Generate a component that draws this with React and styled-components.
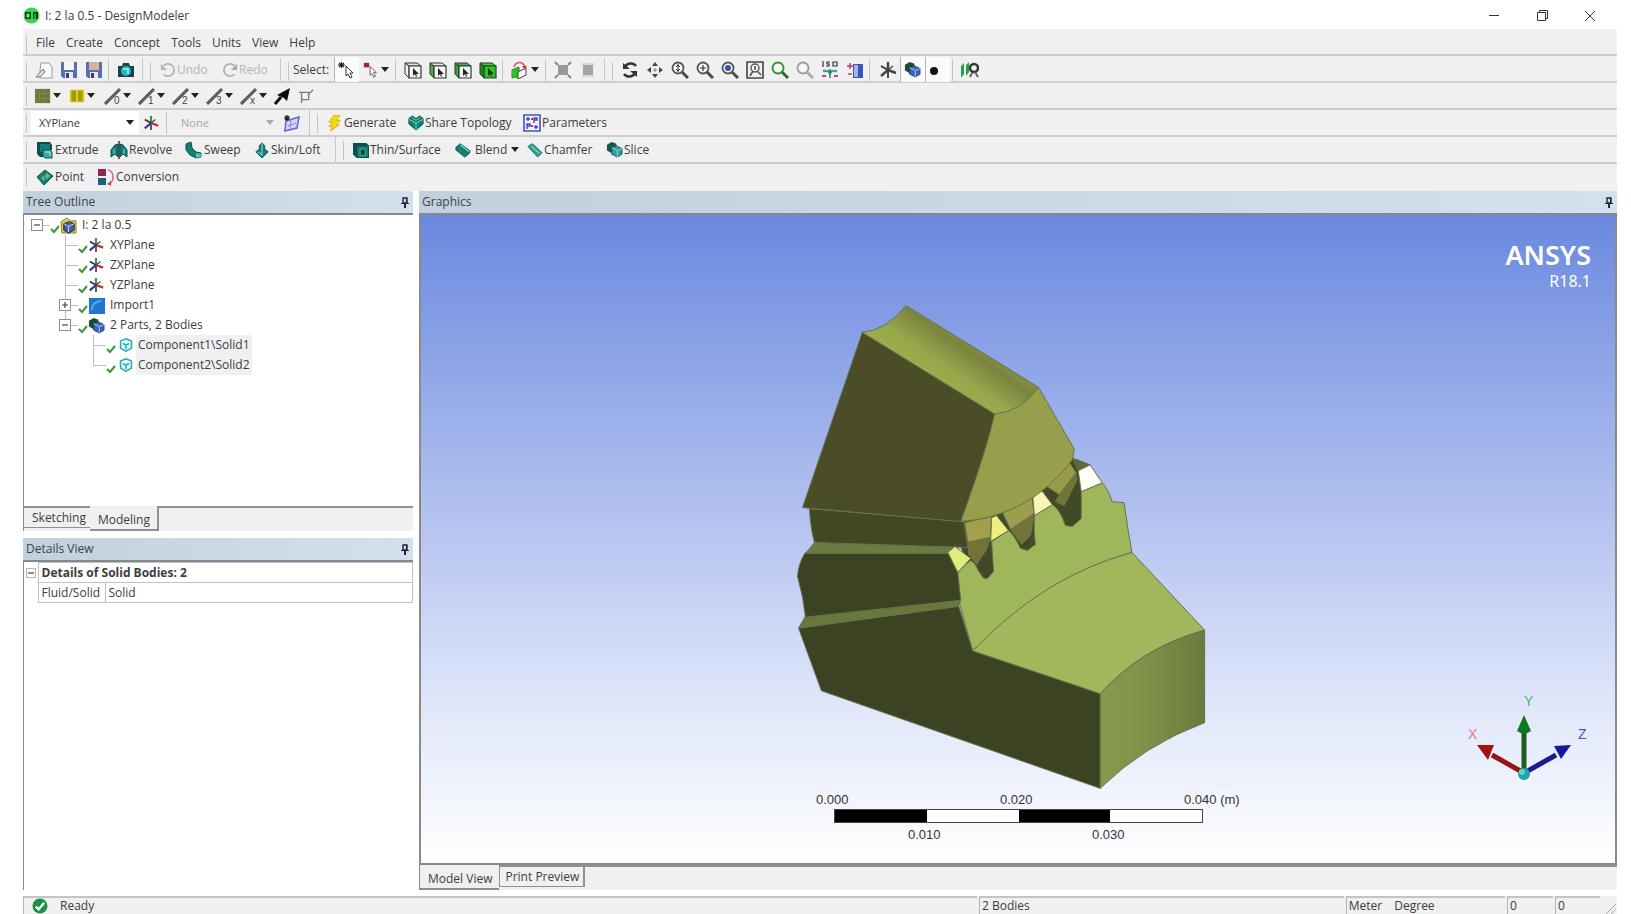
import React, { useState } from "react";
import styled, { createGlobalStyle } from "styled-components";

const GlobalStyle = createGlobalStyle`
  * {
    box-sizing: border-box;
  }
  body {
    margin: 0;
    background: white;
    color: #3c3c3c;
    font-family: "Open Sans", "Noto Sans", sans-serif;
    font-size: 12px;
    line-height: 16px;
  }
  button, select {
    font: inherit;
    color: inherit;
  }
`;

const Window = styled.div`
  height: 100vh;
  min-height: 600px;
  padding: 0 14px 0 23px;
  display: flex;
  flex-direction: column;
  overflow: hidden;
`;

const TitleBar = styled.header`
  height: 29px;
  flex: none;
  display: flex;
  align-items: center;
  justify-content: space-between;
  padding-top: 2px;
`;

const Title = styled.h1`
  margin: 0;
  display: flex;
  align-items: center;
  gap: 5px;
  font-size: 12px;
  font-weight: 400;
`;

const WindowControls = styled.div`
  display: flex;
  padding-right: 3px;
`;

const WindowButton = styled.button`
  width: 48px;
  height: 26px;
  padding: 0;
  border: 0;
  background: none;
  display: flex;
  align-items: center;
  justify-content: center;
`;

const Bar = styled.div`
  height: 27px;
  flex: none;
  display: flex;
  padding-top: ${(props) => (props.$low ? 2 : 0)}px;
  background: #f0f0f0;
  border-bottom: 2px solid ${(props) => (props.$plain ? "#f0f0f0" : "#cdcdcd")};
`;

const Band = styled.div`
  display: flex;
  align-items: center;
  padding-left: 8px;
  padding-right: ${(props) => props.$end || 0}px;
  background: linear-gradient(#c4c4c4, #c4c4c4) 3px 4px / 1px 19px no-repeat;
  border-right: ${(props) => (props.$last ? "0" : "1px solid #c8c8c8")};
  margin-right: 4px;
`;

const MenuItem = styled.button`
  border: 0;
  padding: 0 5px;
  margin-right: 1px;
  background: none;
`;

const Tool = styled.button`
  flex: none;
  width: ${(props) => props.$width || 25}px;
  height: 25px;
  padding: 0 0 0 ${(props) => (props.$active ? 3 : 4)}px;
  border: 0;
  border-left: ${(props) => (props.$active ? "1px solid #b4b4b4" : "0")};
  background: ${(props) => (props.$active ? "#fbfbfb" : "none")};
  display: flex;
  align-items: center;
  gap: 2px;
  white-space: nowrap;
  &:disabled {
    color: #b5b5b5;
  }
`;

const CommandTool = styled(Tool)`
  padding-left: 5px;
  gap: ${(props) => (props.$roomy ? 4 : 1)}px;
`;

const Separator = styled.span`
  width: 1px;
  height: 22px;
  margin: 0 ${(props) => props.$right || 4}px 0 2px;
  background: #c4c4c4;
`;

const Label = styled.span`
  padding-right: 5px;
`;

const Combo = styled.label`
  display: flex;
  align-items: center;
  width: ${(props) => props.$width}px;
  height: 23px;
  padding-right: 5px;
  background: ${(props) => (props.$disabled ? "#f0f0f0" : "white")};
`;

const ComboSelect = styled.select`
  flex: 1;
  min-width: 0;
  border: 0;
  padding: 0 0 0 8px;
  outline: none;
  background: none;
  appearance: none;
  font-size: 11px;
  &:disabled {
    color: #a5a5a5;
    opacity: 1;
  }
`;

const Workspace = styled.main`
  flex: 1;
  min-height: 0;
  display: flex;
  gap: 6px;
`;

const Sidebar = styled.aside`
  width: 390px;
  flex: none;
  display: flex;
  flex-direction: column;
  gap: 7px;
`;

const Panel = styled.section`
  flex: ${(props) => props.$grow || "1"};
  min-width: 0;
  min-height: 0;
  display: flex;
  flex-direction: column;
`;

const PanelHeader = styled.div`
  height: 24px;
  flex: none;
  display: flex;
  align-items: center;
  justify-content: space-between;
  padding: 0 4px 0 3px;
  background: linear-gradient(90deg, #c2d0dd, #d3e1ef);
  border-bottom: 2px solid #84888e;
`;

const PanelTitle = styled.h2`
  margin: 0;
  font-size: 12px;
  font-weight: 400;
  color: #39424e;
`;

const PinButton = styled.button`
  border: 0;
  padding: 0;
  background: none;
  display: flex;
`;

const TreeBox = styled.div`
  flex: 1;
  min-height: 0;
  border-left: 1px solid #8a8a8a;
  background: white;
`;

const TreeRow = styled.div`
  height: 20px;
  display: flex;
  align-items: center;
  padding-left: ${(props) => 7 + props.$level * 28}px;
`;

const Joint = styled.span`
  width: 12px;
  height: 20px;
  display: flex;
  align-items: center;
  background: ${(props) =>
    props.$level
      ? `linear-gradient(#bdbdbd, #bdbdbd) 6px 0 / 1px ${
          props.$last ? 10 : 20
        }px no-repeat,
        linear-gradient(#bdbdbd, #bdbdbd) 6px 10px / 6px 1px no-repeat`
      : "none"};
`;

const Dash = styled.span`
  width: 7px;
  height: 1px;
  background: #bdbdbd;
`;

const Expander = styled.button`
  width: ${(props) => (props.$small ? 10 : 12)}px;
  height: ${(props) => (props.$small ? 10 : 12)}px;
  padding: 0;
  border: 1px solid ${(props) => (props.$small ? "#b5b5b5" : "#8d8d8d")};
  background: white;
  display: flex;
  align-items: center;
  justify-content: center;
`;

const TreeIcon = styled.span`
  width: ${(props) => (props.$wide ? 20 : 18)}px;
  display: flex;
  justify-content: ${(props) => (props.$wide ? "center" : "flex-start")};
`;

const TreeLabel = styled.span`
  padding: 2px 2px 2px ${(props) => (props.$selected ? 2 : 4)}px;
  background: ${(props) => (props.$selected ? "#f0f0f0" : "none")};
`;

const TabStrip = styled.div`
  height: 25px;
  flex: none;
  display: flex;
  align-items: flex-start;
  background: #f0f0f0;
  border-left: 1px solid #8a8a8a;
`;

const TabFill = styled.div`
  flex: 1;
  border-top: 2px solid #909090;
`;

const Tab = styled.button`
  height: ${(props) => (props.$active ? 25 : 22)}px;
  padding: ${(props) => (props.$active ? "6px 7px 1px 9px" : "1px 4px 0")};
  padding-left: ${(props) => (props.$start ? 5 : 8)}px;
  background: #f0f0f0;
  border: 0 solid #909090;
  border-top-width: ${(props) => (props.$active ? 0 : 2)}px;
  border-right-width: ${(props) => (props.$edge ? 2 : 0)}px;
  border-left-width: ${(props) => (props.$start ? 1 : 0)}px;
  border-bottom-width: ${(props) => (props.$active ? 2 : 1)}px;
`;

const DetailsBox = styled.div`
  flex: 1;
  min-height: 0;
  border-left: 1px solid #8a8a8a;
  background: white;
`;

const DetailsTable = styled.table`
  width: 100%;
  border-collapse: collapse;
  table-layout: fixed;
  th,
  td {
    height: 20px;
    padding: 1px 3px;
    border: 1px solid #c2c2c2;
    text-align: left;
  }
  .fold {
    padding: 0 0 0 2px;
    border: 0;
  }
`;

const FoldCol = styled.col`
  width: 14px;
`;

const NameCol = styled.col`
  width: 67px;
`;

const Viewport = styled.div`
  position: relative;
  flex: 1;
  min-height: 0;
  border: 1px solid #8a8a8a;
  border-width: 0 2px 2px 2px;
  background: linear-gradient(#6a89df 0%, #a9baed 40%, #dfe6fa 75%, #ffffff 100%);
`;

const Scene = styled.svg`
  display: block;
  width: 100%;
  height: 100%;
`;

const Brand = styled.div`
  position: absolute;
  top: 22px;
  right: 24px;
  color: white;
  text-align: right;
  font-family: "Noto Sans", sans-serif;
`;

const BrandName = styled.div`
  font-size: 27px;
  line-height: 36px;
  font-weight: 600;
`;

const BrandRelease = styled.div`
  font-size: 16px;
  line-height: 16px;
`;

const Triad = styled.svg`
  position: absolute;
  right: 26px;
  bottom: 76px;
  font-family: "Liberation Sans", sans-serif;
  font-size: 14px;
`;

const Ruler = styled.div`
  position: absolute;
  left: 50%;
  bottom: 20px;
  width: 428px;
  margin-left: -202px;
  color: #333;
  font-family: "Liberation Sans", sans-serif;
  font-size: 13px;
`;

const RulerLabels = styled.div`
  display: flex;
  padding-left: ${(props) => props.$shift || 0}px;
  span {
    width: 184px;
    flex: none;
    white-space: nowrap;
  }
`;

const RulerBar = styled.div`
  width: 369px;
  height: 14px;
  margin: 1px 0 4px 18px;
  display: grid;
  grid-template-columns: repeat(4, 1fr);
  border: 1px solid #444;
  background: white;
  span:nth-child(odd) {
    background: black;
  }
`;

const StatusBar = styled.footer`
  height: 18px;
  margin-top: 6px;
  flex: none;
  display: flex;
  background: #f0f0f0;
`;

const StatusCell = styled.div`
  flex: ${(props) => props.$flex || "none"};
  width: ${(props) => props.$width || "auto"};
  display: flex;
  align-items: center;
  gap: 12px;
  height: 18px;
  padding: 0 1px 0 ${(props) => props.$indent || 2}px;
  border-top: 2px solid #c4c4c4;
  border-left: 1px solid #b4b4b4;
  margin-right: 2px;
`;

const Svg = ({ children, size = 18 }) => (
  <svg
    width={size}
    height={size}
    viewBox="0 0 18 18"
    fill="none"
    stroke="none"
    aria-hidden="true"
  >
    {children}
  </svg>
);

const Caret = ({ color = "#222" }) => (
  <svg width="8" height="5" viewBox="0 0 8 5" aria-hidden="true">
    <path d="M0 0h8L4 5z" fill={color} />
  </svg>
);

const cursorPath = "M8 5v10l2-2 2 4 2-1-2-4h3z";

const Lens = ({ color = "#4a4a4a", rim = "#555", children }) => (
  <Svg>
    <path d="M11 11l6 6" stroke={color} strokeWidth="3" />
    <circle cx="7" cy="7" r="5.5" fill="#f6f6f6" stroke={rim} strokeWidth="1.8" />
    {children}
  </Svg>
);

const PickBox = ({ front = "#f4f4f4", top = "#dcefdc", edge = "#f4f4f4" }) => (
  <Svg>
    <path d="M1 2l4 3v12l-4-4z" fill={edge} stroke="#333" />
    <path d="M1 2h12l4 3H5z" fill={top} stroke="#333" />
    <path d="M5 5h12v12H5z" fill={front} stroke="#2d3a2d" strokeWidth="1.2" />
    <path d="M9 7v8l2-2 1 3 1-1-1-2h3z" fill="#222" />
  </Svg>
);

const LineTool = ({ mark }) => (
  <Svg>
    <path d="M2 17L17 2" stroke="#4b4b4b" strokeWidth="3" />
    <path d="M2 17L17 2" stroke="#999" strokeWidth="0.6" />
    <text x="11" y="17" fontSize="10" fill="#444" fontFamily="Liberation Sans">
      {mark}
    </text>
  </Svg>
);

const Disk = ({ label }) => (
  <Svg>
    <path d="M1 1h16v16H3l-2-2z" fill="#5a6db0" />
    <path d="M4 1h10v8H4z" fill={label} />
    <path d="M5 11h8v6H5z" fill="#e8ecf6" />
    <path d="M6 12h3v5H6z" fill="#33417c" />
  </Svg>
);

const AxisIcon = ({ gray }) => (
  <Svg size={gray ? 18 : 16}>
    <path d="M9 9V1" stroke={gray ? "#444" : "#2f9a48"} strokeWidth="2.4" />
    <path d="M2 5l7 4M9 9v8" stroke="#333" strokeWidth="1.8" />
    <path d="M9 9l-7 6" stroke={gray ? "#444" : "#3434a0"} strokeWidth="2.4" />
    <path d="M9 9l8 3" stroke={gray ? "#444" : "#c62f3c"} strokeWidth="2.6" />
    <path d="M9 9l5-4" stroke="#444" strokeWidth="1.4" />
  </Svg>
);

const Cubes = ({ back = "#174e38", front = "#3d67b8" }) => (
  <Svg size={17}>
    <path d="M1 4l5-3 5 2v8l-5 2-5-3z" fill={back} />
    <path d="M6 7l5-2 6 3v6l-5 3-6-3z" fill={front} stroke="#24365d" strokeWidth=".8" />
    <path d="M6 7l6 3 5-2M12 10v7" stroke="#b6cdf0" strokeWidth=".9" />
  </Svg>
);

const teal = "#128075";
const darkTeal = "#0c4f4a";

const icons = {
  newSketch: (
    <Svg>
      <path d="M6 2h8l3 4v11H5V9z" fill="#fafafa" stroke="#999" />
      <path d="M1 16l7-8 2 3-5 5z" fill="#ddd" stroke="#777" />
    </Svg>
  ),
  camera: (
    <Svg>
      <path d="M1 5h4l1-3h6l1 3h4v11H1z" fill="#1d4148" />
      <circle cx="9" cy="10" r="5" fill="#25b8bb" />
      <path d="M6 8h5v5" stroke="#a5f0ee" strokeWidth="1.5" />
    </Svg>
  ),
  undo: (
    <Svg size={16}>
      <path d="M4 4a7 7 0 1 1 0 10" stroke="#b4b4b4" strokeWidth="2" />
      <path d="M1 2v7h7z" fill="#b4b4b4" />
    </Svg>
  ),
  redo: (
    <Svg size={16}>
      <path d="M14 4a7 7 0 1 0 0 10" stroke="#b0b0b0" strokeWidth="2" />
      <path d="M17 2v7h-7z" fill="#a8a8a8" />
    </Svg>
  ),
  selectNew: (
    <Svg>
      <path d="M0 4h7M3.500 1v6M1 2l5 4M6 2L1 6" stroke="#222" strokeWidth="1.2" />
      <path d={cursorPath} fill="white" stroke="#333" />
    </Svg>
  ),
  selectMode: (
    <Svg size={16}>
      <path d="M1 1h6v5H1z" fill="#a81e38" />
      <path d={cursorPath} fill="white" stroke="#555" />
    </Svg>
  ),
  extend: (
    <Svg>
      <path d="M1 9l7-3v9l-7 2z" fill="#27c427" stroke="#3c6b3c" />
      <path d="M1 9l6 3v6l-6-3z" fill="#27c427" />
      <path d="M7 11l8-4v7l-8 4z" fill="#f7f7f7" stroke="#444" />
      <path d="M3 6c2-6 9-6 11 0" stroke="#cb5a5a" strokeWidth="1.6" />
      <path d="M11 5h5l-2 4z" fill="#b44" />
    </Svg>
  ),
  blockedA: (
    <Svg>
      <path d="M4 4h10v10H4z" fill="#9a9a9a" />
      <path d="M1 1l3 3M17 1l-3 3M1 17l3-3M17 17l-3-3" stroke="#888" strokeWidth="2" />
    </Svg>
  ),
  blockedB: (
    <Svg>
      <path d="M4 4h10v10H4z" fill="#a4a4a4" />
      <path d="M2 3h14M2 15h14" stroke="#c6c6c6" />
    </Svg>
  ),
  rotate: (
    <Svg>
      <path d="M15 5C12 1 6 2 4 6M3 13c3 4 9 3 11-1" stroke="#333" strokeWidth="2.6" />
      <path d="M2 2v6h7zM16 16v-6H9z" fill="#333" />
    </Svg>
  ),
  pan: (
    <Svg>
      <path d="M9 1l3 4H6zM9 17l3-4H6zM1 9l4-3v6zM17 9l-4-3v6z" fill="#444" />
      <path d="M9 7v4M7 9h4" stroke="#888" />
    </Svg>
  ),
  magnifier: (
    <Svg>
      <path d="M1 1h16v16H1z" stroke="#444" strokeWidth="1.6" />
      <circle cx="9" cy="7" r="4" fill="#f6f6f6" stroke="#555" strokeWidth="1.4" />
      <path d="M11 10l4 4M4 15l3-5M9 5v4" stroke="#555" strokeWidth="1.6" />
    </Svg>
  ),
  iso: (
    <Svg>
      <path d="M2 0v6M9 1H6v2h2v2H5M12 1h4v4h-4z" stroke="#333" strokeWidth="1.2" />
      <path d="M2 10h3M13 10h3" stroke="#2aa5b0" strokeWidth="2.4" />
      <path d="M5 10h8M9 8v9" stroke="#2a8d88" strokeWidth="1.6" />
      <path d="M6 10l3 4 3-4z" fill="#28867c" />
      <path d="M1 15h4M13 15h4" stroke="#c34a62" strokeWidth="2" />
    </Svg>
  ),
  lookAt: (
    <Svg>
      <path d="M7 3h10v14H7z" fill="#3a55bb" />
      <path d="M8 4h4v12H8z" fill="#a5b3e8" />
      <path d="M1 5h6M4 2v6M2 13h4" stroke="#c23a5d" strokeWidth="1.5" />
    </Svg>
  ),
  point: (
    <Svg>
      <circle cx="5" cy="10" r="4" fill="#111" />
    </Svg>
  ),
  lookFace: (
    <Svg>
      <path d="M0 5l3-3v11l-3 4zM5 4l3-3v10l-3 4z" fill="#28a04a" />
      <circle cx="13" cy="7" r="4" fill="#eee" stroke="#333" strokeWidth="2.4" />
      <path d="M11 12l-2 4M14 11l3 5" stroke="#666" strokeWidth="2" />
    </Svg>
  ),
  edgeColor: (
    <Svg size={16}>
      <path d="M0 1h17v16H0z" fill="#75773a" />
      <path d="M5 1v16M11 1v16M0 6h17M0 12h17" stroke="#868857" />
    </Svg>
  ),
  faceColor: (
    <Svg size={16}>
      <path d="M1 2h16v14H1z" fill="#cfc80e" />
      <path d="M3 3h5v12H3zM10 3h5v12h-5z" fill="#a39b06" />
      <path d="M9 2v14" stroke="#ece654" />
    </Svg>
  ),
  arrow: (
    <Svg>
      <path d="M2 17l6-7" stroke="#111" strokeWidth="3" />
      <path d="M17 1l-3 13-3-3-7-3z" fill="#0c0c0c" />
    </Svg>
  ),
  vertex: (
    <Svg size={16}>
      <path d="M4 5h8v8H4zM11 8l6-6M1 5h4M4 12v5" stroke="#7d7d7d" strokeWidth="1.5" />
    </Svg>
  ),
  sketch: (
    <Svg>
      <path d="M3 7l13-4-2 11-12 3z" fill="#d5d5f7" stroke="#6b68d0" strokeWidth="1.6" />
      <path d="M5 12l8-3M8 5l-1 10" stroke="#8987dd" />
      <path d="M1 4h6M4 1v6M2 2l4 4M6 2L2 6" stroke="#222" strokeWidth="1.2" />
    </Svg>
  ),
  generate: (
    <Svg size={16}>
      <path d="M8 0h7l-4 6h4l-4 5h3L4 18l2-5H2l4-5H2z" fill="#efdc16" stroke="#c9a408" strokeWidth=".8" />
    </Svg>
  ),
  share: (
    <Svg size={16}>
      <path d="M1 4l4-3 4 3 4-3 4 3v6l-8 7-8-7z" fill={teal} stroke={darkTeal} />
      <path d="M1 5l8 4 8-4M9 9v8M5 3l4 3 4-3" stroke="#7de0ce" />
    </Svg>
  ),
  parameters: (
    <Svg>
      <path d="M1 1h16v16H1z" fill="#f2f2ff" stroke="#3b57b8" strokeWidth="1.6" />
      <path d="M4 15v-5h3v2H4M11 9V4h3v2h-3M3 5h4M5 3v4M11 13h4M13 11v4" stroke="#4a3dc2" strokeWidth="1.4" />
      <path d="M8 5h2M8 12h2" stroke="#c53a60" strokeWidth="2" />
    </Svg>
  ),
  extrude: (
    <Svg>
      <path d="M1 1h13l2 3v5h-6v7H4l-3-3z" fill={darkTeal} />
      <path d="M4 3h10v8H4z" fill={teal} />
      <path d="M7 9h7l2 2v6H9l-2-2z" fill="#35ab9c" stroke="#0c5f58" />
      <path d="M9 11h5v4" stroke="#b8f0e5" />
    </Svg>
  ),
  revolve: (
    <Svg>
      <path d="M1 16V9l4-5 3-1v13l-3-3zM17 16V9l-4-5-3-1v13l3-3z" fill={teal} stroke={darkTeal} />
      <path d="M9 0v18" stroke="#203f3c" strokeWidth="1.5" />
      <path d="M4 8v5M14 8v5" stroke="#90e1d3" />
    </Svg>
  ),
  sweep: (
    <Svg>
      <path d="M1 3l5-2 1 6 4 4 5 1v4l-5 1-6-3-4-5z" fill={teal} stroke={darkTeal} />
      <path d="M11 12l5 1v3l-5 1z" fill="#55c7b7" />
    </Svg>
  ),
  skin: (
    <Svg size={16}>
      <path d="M6 4l3-3 3 3v4l4 3-7 7-7-7 4-3z" fill={teal} stroke={darkTeal} />
      <path d="M9 2v14M4 11l5 3" stroke="#74d4c7" strokeWidth="1.3" />
    </Svg>
  ),
  thin: (
    <Svg size={16}>
      <path d="M0 1h15l3 3v14H4l-4-4z" fill={darkTeal} />
      <path d="M5 5h12v12H5z" fill={teal} />
      <path d="M8 8h6v7H8z" fill="#0b4541" stroke="#4bb9aa" />
    </Svg>
  ),
  blend: (
    <Svg size={16}>
      <path d="M1 6l5-4 11 8-1 3-5 4L1 9z" fill={teal} stroke={darkTeal} />
      <path d="M6 3l10 8" stroke="#77d8c7" strokeWidth="1.5" />
    </Svg>
  ),
  chamfer: (
    <Svg size={16}>
      <path d="M1 5l5-3 11 10-5 5z" fill="#2e9e92" stroke="#16716a" />
      <path d="M5 5l9 8" stroke="#7fd4c9" strokeWidth="1.5" />
    </Svg>
  ),
  slice: <Cubes back="#0f5b50" front="#28a38f" />,
  pointFeature: (
    <Svg>
      <path d="M1 9l8-7 8 6-9 9z" fill={teal} stroke={darkTeal} />
      <path d="M5 10l6-5 3 3-6 5z" fill="#64b8a8" />
      <path d="M9 2v11" stroke="#3e6840" />
    </Svg>
  ),
  conversion: (
    <Svg>
      <path d="M1 1h8v7H1z" fill="#8d2452" />
      <path d="M1 10h8v7H1z" fill="#20617a" />
      <path d="M11 2c6 1 7 11 1 14" stroke="#e06c78" strokeWidth="1.6" />
      <path d="M14 13l-4 3 4 2z" fill="#cc4455" />
    </Svg>
  ),
  model: (
    <Svg size={17}>
      <path d="M1 5l6-4 4 3h6v13H2z" fill="#d8cf4c" stroke="#8a8130" />
      <path d="M4 7l6-2 5 2v7l-6 3-5-3z" fill="#46619a" stroke="#1a2444" />
      <path d="M4 7l5 3 6-3M9 10v6" stroke="#cdd8ef" />
    </Svg>
  ),
  importIcon: (
    <Svg size={17}>
      <path d="M1 1h17v17H1z" fill="#1f76cc" />
      <path d="M4 14c0-6 3-9 10-10" stroke="#56a7ec" strokeWidth="2" />
    </Svg>
  ),
  solid: (
    <Svg size={14}>
      <path d="M9 1l7 3v9l-7 4-7-4V4z" fill="#e6fafb" stroke="#25adb8" strokeWidth="2" />
      <path d="M5 7l4 2 4-2M9 9v5" stroke="#25adb8" strokeWidth="2" />
    </Svg>
  ),
};

const Tick = () => (
  <svg width="10" height="20" viewBox="0 0 10 20" fill="none" aria-hidden="true">
    <path d="M1 14l3 3 5-6" stroke="#3b9638" strokeWidth="2" />
  </svg>
);

const Pin = () => (
  <svg width="8" height="11" viewBox="0 0 8 11" aria-hidden="true">
    <path d="M2 1h4v5H2z" fill="#cfd9e3" stroke="#1f2732" strokeWidth="1.4" />
    <path d="M5 1h1v5H5zM0 6h8v1H0zM3 7h2v4H3z" fill="#1f2732" />
  </svg>
);

const treeItems = [
  { name: "I: 2 la 0.5", level: 0, icon: icons.model, open: true },
  { name: "XYPlane", level: 1, icon: <AxisIcon /> },
  { name: "ZXPlane", level: 1, icon: <AxisIcon /> },
  { name: "YZPlane", level: 1, icon: <AxisIcon /> },
  { name: "Import1", level: 1, icon: icons.importIcon, open: false },
  { name: "2 Parts, 2 Bodies", level: 1, icon: <Cubes />, open: true, last: true },
  { name: "Component1\\Solid1", level: 2, icon: icons.solid, selected: true },
  { name: "Component2\\Solid2", level: 2, icon: icons.solid, selected: true, last: true },
];

const menus = ["File", "Create", "Concept", "Tools", "Units", "View", "Help"];

function ToolButton({ icon, text, caret, ...rest }) {
  const Box = text ? CommandTool : Tool;
  return (
    <Box $roomy={text && caret} {...rest}>
      {icon}
      {text && <span>{text}</span>}
      {caret && <Caret />}
    </Box>
  );
}

function Toolbars() {
  const [plane, setPlane] = useState("XYPlane");

  return (
    <>
      <Bar as="nav" $low>
        <Band $last>
          {menus.map((name) => (
            <MenuItem key={name}>{name}</MenuItem>
          ))}
        </Band>
      </Bar>
      <Bar $low>
        <Band $end={4}>
          <ToolButton icon={icons.newSketch} aria-label="New" />
          <ToolButton icon={<Disk label="#f4f6fb" />} aria-label="Save" />
          <ToolButton icon={<Disk label="#d9b394" />} aria-label="Export" />
          <Separator />
          <ToolButton icon={icons.camera} aria-label="Capture" />
        </Band>
        <Band $end={1}>
          <ToolButton icon={icons.undo} text="Undo" $width={62} disabled />
          <ToolButton icon={icons.redo} text="Redo" $width={62} disabled />
        </Band>
        <Band $end={4}>
          <Label>Select:</Label>
          <ToolButton icon={icons.selectNew} aria-label="New selection" $active />
          <ToolButton icon={icons.selectMode} caret aria-label="Select mode" $width={34} />
          <Separator />
          <ToolButton icon={<PickBox />} aria-label="Points" />
          <ToolButton icon={<PickBox edge="#46b04a" />} aria-label="Edges" />
          <ToolButton icon={<PickBox top="#2fc72f" edge="#36a336" />} aria-label="Faces" />
          <ToolButton
            icon={<PickBox front="#20c91f" top="#2fdc2f" edge="#1d8f1d" />}
            aria-label="Bodies"
          />
          <Separator />
          <ToolButton icon={icons.extend} caret aria-label="Extend selection" $width={36} />
          <Separator />
          <ToolButton icon={icons.blockedA} aria-label="Expand" disabled />
          <ToolButton icon={icons.blockedB} aria-label="Shrink" disabled />
        </Band>
        <Band $last>
          <ToolButton icon={icons.rotate} aria-label="Rotate" />
          <ToolButton icon={icons.pan} aria-label="Pan" />
          <ToolButton
            icon={
              <Lens>
                <path d="M7 3v8M5 6l2-2 2 2M5 8l2 2 2-2" stroke="#333" />
              </Lens>
            }
            aria-label="Zoom"
          />
          <ToolButton
            icon={
              <Lens>
                <path d="M7 4v6M4 7h6" stroke="#333" strokeWidth="1.2" />
              </Lens>
            }
            aria-label="Box zoom"
          />
          <ToolButton
            icon={
              <Lens>
                <circle cx="7" cy="7" r="3" fill="#3c4fae" />
              </Lens>
            }
            aria-label="Zoom to fit"
          />
          <ToolButton icon={icons.magnifier} aria-label="Magnifier" />
          <ToolButton icon={<Lens rim="#2b9130" color="#2b6b30" />} aria-label="Previous view" />
          <ToolButton icon={<Lens rim="#9b9b9b" color="#adadad" />} aria-label="Next view" />
          <ToolButton icon={icons.iso} aria-label="Isometric view" />
          <ToolButton icon={icons.lookAt} aria-label="Look at" />
          <Separator $right={5} />
          <ToolButton icon={<AxisIcon gray />} aria-label="Display plane" />
          <ToolButton icon={<Cubes />} aria-label="Display model" $active />
          <ToolButton icon={icons.point} aria-label="Display points" $active />
          <Separator />
          <ToolButton icon={icons.lookFace} aria-label="Look at face" />
        </Band>
      </Bar>
      <Bar>
        <Band $last>
          <ToolButton icon={icons.edgeColor} caret aria-label="Face colour" $width={34} />
          <ToolButton icon={icons.faceColor} caret aria-label="Edge colour" $width={34} />
          {["0", "1", "2", "3", "x"].map((mark) => (
            <ToolButton
              key={mark}
              icon={<LineTool mark={mark} />}
              caret
              aria-label={`Edge joints ${mark}`}
              $width={34}
            />
          ))}
          <ToolButton icon={icons.arrow} aria-label="Edge direction" />
          <ToolButton icon={icons.vertex} aria-label="Display vertices" />
        </Band>
      </Bar>
      <Bar>
        <Band $end={5}>
          <Combo $width={108}>
            <ComboSelect
              aria-label="Active plane"
              value={plane}
              onChange={(e) => setPlane(e.target.value)}
            >
              <option>XYPlane</option>
              <option>ZXPlane</option>
              <option>YZPlane</option>
            </ComboSelect>
            <Caret />
          </Combo>
          <ToolButton icon={<AxisIcon />} aria-label="New plane" />
          <Separator $right={6} />
          <Combo $width={106} $disabled>
            <ComboSelect aria-label="Active sketch" disabled>
              <option>None</option>
            </ComboSelect>
            <Caret color="#aaa" />
          </Combo>
          <ToolButton icon={icons.sketch} aria-label="New sketch" />
        </Band>
        <Band $last>
          <ToolButton icon={icons.generate} text="Generate" $width={81} />
          <ToolButton icon={icons.share} text="Share Topology" $width={115} />
          <ToolButton icon={icons.parameters} text="Parameters" $width={90} />
        </Band>
      </Bar>
      <Bar>
        <Band $end={10}>
          <ToolButton icon={icons.extrude} text="Extrude" $width={74} />
          <ToolButton icon={icons.revolve} text="Revolve" $width={75} />
          <ToolButton icon={icons.sweep} text="Sweep" $width={69} />
          <ToolButton icon={icons.skin} text="Skin/Loft" $width={76} />
        </Band>
        <Band $last>
          <ToolButton icon={icons.thin} text="Thin/Surface" $width={102} />
          <ToolButton icon={icons.blend} text="Blend" caret $width={72} />
          <ToolButton icon={icons.chamfer} text="Chamfer" $width={79} />
          <ToolButton icon={icons.slice} text="Slice" $width={60} />
        </Band>
      </Bar>
      <Bar $plain>
        <Band $last>
          <ToolButton icon={icons.pointFeature} text="Point" $width={61} />
          <ToolButton icon={icons.conversion} text="Conversion" $width={100} />
        </Band>
      </Bar>
    </>
  );
}

function Header({ title }) {
  return (
    <PanelHeader>
      <PanelTitle>{title}</PanelTitle>
      <PinButton aria-label={`Pin ${title}`}>
        <Pin />
      </PinButton>
    </PanelHeader>
  );
}

function ExpanderBox({ open, label, small }) {
  return (
    <Expander aria-label={label} $small={small}>
      <svg width="8" height="8" viewBox="0 0 8 8" aria-hidden="true">
        <path d={open ? "M1 4h6" : "M1 4h6M4 1v6"} stroke="#444" strokeWidth="1.2" />
      </svg>
    </Expander>
  );
}

function TreeOutline() {
  return (
    <TreeBox role="tree">
      {treeItems.map((item) => (
        <TreeRow key={item.name} role="treeitem" $level={item.level}>
          <Joint $level={item.level} $last={item.last}>
            {item.open !== undefined && (
              <ExpanderBox open={item.open} label={`Toggle ${item.name}`} />
            )}
          </Joint>
          <Dash />
          <Tick />
          <TreeIcon $wide={item.level === 2}>{item.icon}</TreeIcon>
          <TreeLabel $selected={item.selected}>{item.name}</TreeLabel>
        </TreeRow>
      ))}
    </TreeBox>
  );
}

function Model() {
  return (
    <Scene viewBox="421 214 1195 651" preserveAspectRatio="xMidYMid meet" aria-label="Solid bodies">
      <defs>
        <linearGradient
          id="groove"
          gradientUnits="userSpaceOnUse"
          x1="930"
          y1="382"
          x2="966"
          y2="330"
        >
          <stop offset="0" stopColor="#9fae4c" />
          <stop offset="0.35" stopColor="#98a64b" />
          <stop offset="0.75" stopColor="#7a8440" />
          <stop offset="1" stopColor="#8a9545" />
        </linearGradient>
        <linearGradient id="end">
          <stop offset="0" stopColor="#869a4c" />
          <stop offset="0.45" stopColor="#7f9149" />
          <stop offset="1" stopColor="#6a7a3e" />
        </linearGradient>
      </defs>
      <g stroke="#64734f" strokeWidth="1" strokeLinejoin="round">
        <path d="M1073 458L1091 465 1080 472 1092 535 1064 540 1036 562 1015 562 1000 592 978 592 960 545 961 522 1040 480z" fill="#414a25" stroke="none" />
        <path d="M958 573L971 561Q976 564 979 572L984 579 988 579 994 572 992 542 1009 531Q1015 536 1021 549L1028 551 1036 545Q1034 530 1035 516L1053 505Q1061 510 1066 526L1073 527 1082 519V492L1103 483Q1109 489 1113 502L1125 503 1129 530 1133 553Q1045 577 973 652L960 605z" fill="#9fb65a" />
        <path d="M973 652Q1044 577 1133 553L1206 631Q1143 648 1101 695z" fill="#a2b65c" />
        <path d="M1101 695Q1143 649 1206 631V724Q1146 746 1101 790z" fill="url(#end)" />
        <path d="M798 629L959 607 973 652 1101 695V790L821 692z" fill="#3c4322" />
        <path d="M798 629L805 617 961 600 959 607z" fill="#69773d" />
        <path d="M805 553H948L958 573 961 601 805 618 802 598 797 577Q798 563 805 553z" fill="#3c4322" />
        <path d="M814 543L882 545 955 547 948 554H805z" fill="#6b7b42" />
        <path d="M809 509L964 522 968 548 814 543Q810 529 809 509z" fill="#434722" />
        <path d="M948 553L955 547 971 559 958 573z" fill="#e3ec7a" />
        <path d="M965 523L992 517 991 538 968 543z" fill="#a39f4c" />
        <path d="M968 543L991 538 987 550 977 565 969 555z" fill="#747239" />
        <path d="M992 518L997 516 1009 531 991 542z" fill="#eeee83" />
        <path d="M1003 513L1032 496 1035 514 1011 530z" fill="#9d9d4b" />
        <path d="M1011 530L1035 514 1031 536 1022 545z" fill="#73733a" />
        <path d="M1033 493L1041 489 1053 505 1035 516z" fill="#faf5b6" />
        <path d="M1045 485L1069 461 1077 473 1060 495z" fill="#999b4a" />
        <path d="M1060 495L1077 473 1078 480 1065 506 1056 502z" fill="#707538" />
        <path d="M1073 458L1091 465 1079 471z" fill="#5b6b39" />
        <path d="M1079 471L1091 465 1103 483 1082 492z" fill="#fffff5" />
        <path d="M961 522Q1030 517 1073 460L1075 449 1039 387Q1021 412 995 414L978 462z" fill="#979f4b" />
        <path d="M862 332Q886 330 906 305L1039 387Q1021 412 995 414z" fill="url(#groove)" />
        <path d="M862 332L995 414Q987 450 961 522L802 508z" fill="#4a4d26" />
      </g>
    </Scene>
  );
}

function TriadView() {
  return (
    <Triad width="126" height="100" viewBox="0 -8 126 100" aria-label="Axes">
      <path d="M61 78L29 60" stroke="#951515" strokeWidth="5" />
      <path d="M14 50l17 0-6 15z" fill="#a51212" />
      <path d="M61 78L93 60" stroke="#1c1c92" strokeWidth="5" />
      <path d="M108 50l-17 1 7 13z" fill="#1616a0" />
      <path d="M61 78V37" stroke="#1b5d22" strokeWidth="5" />
      <path d="M61 20l7 16q-7 5-14 0z" fill="#0d7a1e" />
      <circle cx="61" cy="79" r="6" fill="#1fa6a8" />
      <circle cx="59" cy="77" r="3" fill="#5fd2d0" />
      <text x="5" y="44" fill="#e47986">X</text>
      <text x="61" y="11" fill="#52b46c">Y</text>
      <text x="115" y="44" fill="#4a50c8">Z</text>
    </Triad>
  );
}

function Graphics() {
  return (
    <Panel>
      <Header title="Graphics" />
      <Viewport>
        <Model />
        <Brand>
          <BrandName>ANSYS</BrandName>
          <BrandRelease>R18.1</BrandRelease>
        </Brand>
        <TriadView />
        <Ruler>
          <RulerLabels>
            <span>0.000</span>
            <span>0.020</span>
            <span>0.040 (m)</span>
          </RulerLabels>
          <RulerBar>
            <span />
            <span />
            <span />
            <span />
          </RulerBar>
          <RulerLabels $shift={92}>
            <span>0.010</span>
            <span>0.030</span>
          </RulerLabels>
        </Ruler>
      </Viewport>
      <TabStrip>
        <Tab $active>Model View</Tab>
        <Tab $start $edge>
          Print Preview
        </Tab>
        <TabFill as="span" />
      </TabStrip>
    </Panel>
  );
}

function App() {
  return (
    <Window>
      <GlobalStyle />
      <TitleBar>
        <Title>
          <svg width="17" height="17" viewBox="0 0 17 17" aria-hidden="true">
            <circle cx="8.5" cy="8.5" r="8" fill="#35d84a" />
            <path d="M2 5h6v7H2zM10 5h5v7h-5z" fill="#16451f" />
            <path d="M4 7h2v3H4zM12 7v5" fill="#7de37d" stroke="#7de37d" />
          </svg>
          I: 2 la 0.5 - DesignModeler
        </Title>
        <WindowControls>
          <WindowButton aria-label="Minimize">
            <svg width="10" height="10">
              <path d="M0 4.500h10" stroke="#333" />
            </svg>
          </WindowButton>
          <WindowButton aria-label="Maximize">
            <svg width="11" height="11" fill="none">
              <path d="M.5 2.500h8v8h-8zM2.500 2V.5h8v8H9" stroke="#333" />
            </svg>
          </WindowButton>
          <WindowButton aria-label="Close">
            <svg width="10" height="10">
              <path d="M0 0l10 10M10 0L0 10" stroke="#333" />
            </svg>
          </WindowButton>
        </WindowControls>
      </TitleBar>
      <Toolbars />
      <Workspace>
        <Sidebar>
          <Panel $grow="341">
            <Header title="Tree Outline" />
            <TreeOutline />
            <TabStrip>
              <Tab>Sketching</Tab>
              <Tab $active $edge>
                Modeling
              </Tab>
              <TabFill />
            </TabStrip>
          </Panel>
          <Panel $grow="353">
            <Header title="Details View" />
            <DetailsBox>
              <DetailsTable>
                <colgroup>
                  <FoldCol />
                  <NameCol />
                  <col />
                </colgroup>
                <tbody>
                  <tr>
                    <td className="fold">
                      <ExpanderBox open small label="Toggle details" />
                    </td>
                    <th colSpan="2">Details of Solid Bodies: 2</th>
                  </tr>
                  <tr>
                    <td className="fold" />
                    <td>Fluid/Solid</td>
                    <td>Solid</td>
                  </tr>
                </tbody>
              </DetailsTable>
            </DetailsBox>
          </Panel>
        </Sidebar>
        <Graphics />
      </Workspace>
      <StatusBar>
        <StatusCell $flex="955" $indent={8}>
          <svg width="16" height="16" viewBox="0 0 17 17" fill="none" aria-hidden="true">
            <circle cx="8.5" cy="8.5" r="8" fill="#1f8f47" />
            <path d="M4 9l3 3 6-7" stroke="white" strokeWidth="2.4" />
          </svg>
          Ready
        </StatusCell>
        <StatusCell $flex="365">2 Bodies</StatusCell>
        <StatusCell $flex="157">
          <span>Meter</span>
          <span>Degree</span>
        </StatusCell>
        <StatusCell $width="46px">0</StatusCell>
        <StatusCell $width="45px">0</StatusCell>
        <svg width="15" height="18" viewBox="0 0 15 18" aria-hidden="true">
          <path d="M4 18L14 8M9 18l5-5" stroke="#a8a8a8" />
        </svg>
      </StatusBar>
    </Window>
  );
}

export default App;
